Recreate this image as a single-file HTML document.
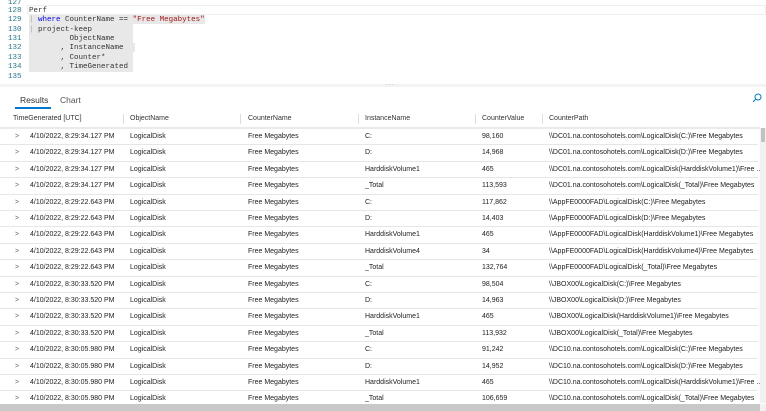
<!DOCTYPE html>
<html><head><style>
body{margin:0;width:766px;height:411px;overflow:hidden;background:#fff;font-family:"Liberation Sans",sans-serif;position:relative}
.code{position:absolute;left:0;top:0;width:766px;font-family:"Liberation Mono",monospace;font-size:7.5px;color:#333}
.ln{position:absolute;left:8px;color:#237893;font-size:7.5px}
.cl{position:absolute;left:29px;white-space:pre}
.hl{position:absolute;background:#e8e8e8}
.split{position:absolute;left:0;top:84px;width:766px;height:3px;background:#f3f3f3}
.tab{position:absolute;top:95px;font-size:8.5px;color:#333}
.hdr{position:absolute;top:111px;left:0;width:760px;height:16px;border-bottom:2px solid #eaeaea;font-size:7px;color:#333}
.hdr span{position:absolute;top:4px}
.sep{position:absolute;top:3px;width:1px;height:10px;background:#ddd}
.row{position:absolute;left:0;width:758px;height:16.4px;border-bottom:1px solid #e6e6e6;font-size:7px;color:#222;white-space:nowrap}
.row span{position:absolute;top:5px}
</style></head><body>
<div class="code">
<div style="position:absolute;left:27px;top:5px;width:739px;height:10px;border:1px solid #eee;box-sizing:border-box"></div>
<div class="hl" style="left:29px;top:15px;width:176px;height:9px"></div>
<div class="hl" style="left:29px;top:24px;width:104px;height:48px"></div>
<div class="hl" style="left:133px;top:43px;width:2px;height:9px"></div>
<div class="ln" style="top:-1px">127</div>
<div class="ln" style="top:7px">128</div><div class="cl" style="top:7px">Perf</div>
<div class="ln" style="top:16px">129</div><div class="cl" style="top:16px"><span style="color:#aaa">|</span> <span style="color:#00f">where</span> CounterName == <span style="color:#a31515">"Free Megabytes"</span></div>
<div class="ln" style="top:26px">130</div><div class="cl" style="top:26px"><span style="color:#aaa">|</span> project-keep</div>
<div class="ln" style="top:35px">131</div><div class="cl" style="top:35px">         ObjectName</div>
<div class="ln" style="top:44px">132</div><div class="cl" style="top:44px">       , InstanceName</div>
<div class="ln" style="top:54px">133</div><div class="cl" style="top:54px">       , Counter*</div>
<div class="ln" style="top:63px">134</div><div class="cl" style="top:63px">       , TimeGenerated</div>
<div class="ln" style="top:73px">135</div>
</div>
<div class="split"><span style="position:absolute;left:386px;top:-4px;font-size:7px;color:#999;letter-spacing:1px">...</span></div>
<div class="tab" style="left:20px">Results</div>
<div style="position:absolute;left:15px;top:107px;width:36px;height:2px;background:#0078d4"></div>
<div class="tab" style="left:60px;color:#555">Chart</div>
<svg style="position:absolute;left:752px;top:93px" width="10" height="10" viewBox="0 0 10 10"><circle cx="6" cy="4" r="3" fill="none" stroke="#0078d4" stroke-width="1"/><line x1="4" y1="6" x2="1" y2="9" stroke="#0078d4" stroke-width="1"/></svg>
<div class="hdr">
<span style="left:13px">TimeGenerated [UTC]</span><div class="sep" style="left:123px"></div>
<span style="left:130px">ObjectName</span><div class="sep" style="left:240px"></div>
<span style="left:248px">CounterName</span><div class="sep" style="left:358px"></div>
<span style="left:365px">InstanceName</span><div class="sep" style="left:475px"></div>
<span style="left:482px">CounterValue</span><div class="sep" style="left:542px"></div>
<span style="left:549px">CounterPath</span>
</div>
<div id="rows"></div>
<div style="position:absolute;left:760px;top:128px;width:6px;height:275px;background:#f1f1f1"></div>
<div style="position:absolute;left:761px;top:128px;width:4px;height:14px;background:#c1c1c1"></div>
<div style="position:absolute;left:0;top:404px;width:760px;height:7px;background:#c8c8c8"></div>
<div style="position:absolute;left:760px;top:404px;width:6px;height:7px;background:#f1f1f1"></div>
<script>
var d=[
["4/10/2022, 8:29:34.127 PM","C:","98,160","\\\\DC01.na.contosohotels.com\\LogicalDisk(C:)\\Free Megabytes"],
["4/10/2022, 8:29:34.127 PM","D:","14,968","\\\\DC01.na.contosohotels.com\\LogicalDisk(D:)\\Free Megabytes"],
["4/10/2022, 8:29:34.127 PM","HarddiskVolume1","465","\\\\DC01.na.contosohotels.com\\LogicalDisk(HarddiskVolume1)\\Free ..."],
["4/10/2022, 8:29:34.127 PM","_Total","113,593","\\\\DC01.na.contosohotels.com\\LogicalDisk(_Total)\\Free Megabytes"],
["4/10/2022, 8:29:22.643 PM","C:","117,862","\\\\AppFE0000FAD\\LogicalDisk(C:)\\Free Megabytes"],
["4/10/2022, 8:29:22.643 PM","D:","14,403","\\\\AppFE0000FAD\\LogicalDisk(D:)\\Free Megabytes"],
["4/10/2022, 8:29:22.643 PM","HarddiskVolume1","465","\\\\AppFE0000FAD\\LogicalDisk(HarddiskVolume1)\\Free Megabytes"],
["4/10/2022, 8:29:22.643 PM","HarddiskVolume4","34","\\\\AppFE0000FAD\\LogicalDisk(HarddiskVolume4)\\Free Megabytes"],
["4/10/2022, 8:29:22.643 PM","_Total","132,764","\\\\AppFE0000FAD\\LogicalDisk(_Total)\\Free Megabytes"],
["4/10/2022, 8:30:33.520 PM","C:","98,504","\\\\JBOX00\\LogicalDisk(C:)\\Free Megabytes"],
["4/10/2022, 8:30:33.520 PM","D:","14,963","\\\\JBOX00\\LogicalDisk(D:)\\Free Megabytes"],
["4/10/2022, 8:30:33.520 PM","HarddiskVolume1","465","\\\\JBOX00\\LogicalDisk(HarddiskVolume1)\\Free Megabytes"],
["4/10/2022, 8:30:33.520 PM","_Total","113,932","\\\\JBOX00\\LogicalDisk(_Total)\\Free Megabytes"],
["4/10/2022, 8:30:05.980 PM","C:","91,242","\\\\DC10.na.contosohotels.com\\LogicalDisk(C:)\\Free Megabytes"],
["4/10/2022, 8:30:05.980 PM","D:","14,952","\\\\DC10.na.contosohotels.com\\LogicalDisk(D:)\\Free Megabytes"],
["4/10/2022, 8:30:05.980 PM","HarddiskVolume1","465","\\\\DC10.na.contosohotels.com\\LogicalDisk(HarddiskVolume1)\\Free ..."],
["4/10/2022, 8:30:05.980 PM","_Total","106,659","\\\\DC10.na.contosohotels.com\\LogicalDisk(_Total)\\Free Megabytes"]];
var h="";
d.forEach(function(r,i){var t=128+i*16.4;
h+='<div class="row" style="top:'+t+'px"><span style="left:15px;color:#666">&gt;</span><span style="left:30px">'+r[0]+'</span><span style="left:130px">LogicalDisk</span><span style="left:248px">Free Megabytes</span><span style="left:365px">'+r[1]+'</span><span style="left:482px">'+r[2]+'</span><span style="left:549px">'+r[3]+'</span></div>';});
document.getElementById("rows").innerHTML=h;
</script>
</body></html>
